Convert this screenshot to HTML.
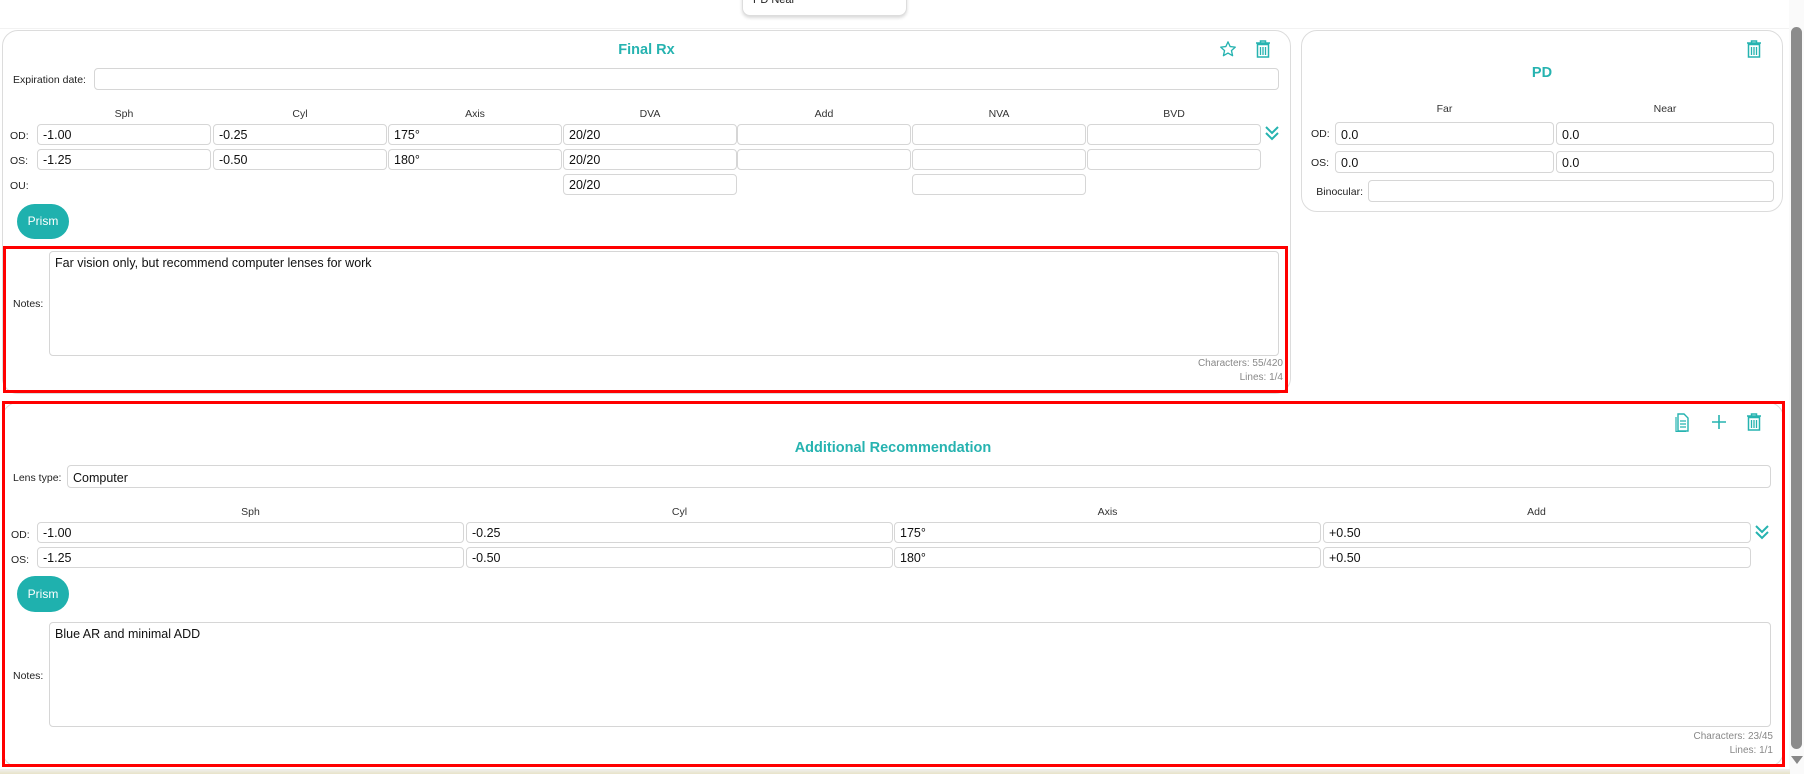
<!DOCTYPE html>
<html><head><meta charset="utf-8"><style>
*{box-sizing:border-box;margin:0;padding:0}
body{width:1804px;height:774px;overflow:hidden;background:#fff;font-family:"Liberation Sans",sans-serif;color:#222;position:relative}
.a{position:absolute}
.card{position:absolute;border:1px solid #dcdcdc;border-radius:16px;background:#fff}
.in{position:absolute;border:1px solid #d6d6d6;border-radius:4px;background:#fff;font-size:12.5px;padding-left:5px;line-height:20px;color:#111}
.lb{position:absolute;font-size:10.5px;color:#222;white-space:nowrap}
.hd{position:absolute;font-size:10.5px;color:#333;text-align:center}
.title{position:absolute;color:#26b3b0;font-weight:bold;font-size:14.5px;text-align:center}
.prism{position:absolute;background:#1fb1ae;color:#fff;border-radius:18px;font-size:12px;text-align:center}
.red{position:absolute;border:3px solid #ff0000}
.cnt{position:absolute;font-size:10px;color:#888;text-align:right}
</style></head><body>

<div class="a" style="left:742px;top:-12px;width:165px;height:28px;border:1px solid #ddd;border-radius:0 0 8px 8px;box-shadow:0 2px 3px rgba(0,0,0,.15);background:#fff;font-size:11px;padding:0 0 0 10px;line-height:22px;overflow:hidden">PD Near</div>
<div class="a" style="left:0;top:28px;width:1790px;height:1px;background:#f2f2f2"></div>

<!-- Final Rx card -->
<div class="card" style="left:2px;top:30px;width:1289px;height:364px"></div>
<div class="title" style="left:2px;top:42px;width:1289px">Final Rx</div>
<svg class="a" style="left:1219px;top:40px" width="18" height="18" viewBox="0 0 24 24"><path d="M12 2.5l2.9 6.3 6.8.7-5.1 4.6 1.5 6.8L12 17.4l-6.1 3.5 1.5-6.8L2.3 9.5l6.8-.7z" fill="none" stroke="#26b3b0" stroke-width="1.8" stroke-linejoin="round"/></svg>
<svg class="a" style="left:1255px;top:40px" width="16" height="18" viewBox="0 0 16 18"><path d="M1 3h14M5.5 3V1h5v2M2.5 4.5h11V17h-11z" fill="none" stroke="#26b3b0" stroke-width="1.5"/><path d="M5.5 7v8M8 7v8M10.5 7v8" stroke="#26b3b0" stroke-width="1.3"/></svg>

<div class="lb" style="left:13px;top:74px">Expiration date:</div>
<div class="in" style="left:94px;top:68px;width:1185px;height:22px"></div>

<div class="hd" style="left:37px;top:108px;width:174px">Sph</div>
<div class="hd" style="left:213px;top:108px;width:174px">Cyl</div>
<div class="hd" style="left:388px;top:108px;width:174px">Axis</div>
<div class="hd" style="left:563px;top:108px;width:174px">DVA</div>
<div class="hd" style="left:737px;top:108px;width:174px">Add</div>
<div class="hd" style="left:912px;top:108px;width:174px">NVA</div>
<div class="hd" style="left:1087px;top:108px;width:174px">BVD</div>

<div class="lb" style="left:10px;top:130px">OD:</div>
<div class="in" style="left:37px;top:124px;width:174px;height:21px">-1.00</div>
<div class="in" style="left:213px;top:124px;width:174px;height:21px">-0.25</div>
<div class="in" style="left:388px;top:124px;width:174px;height:21px">175°</div>
<div class="in" style="left:563px;top:124px;width:174px;height:21px">20/20</div>
<div class="in" style="left:737px;top:124px;width:174px;height:21px"></div>
<div class="in" style="left:912px;top:124px;width:174px;height:21px"></div>
<div class="in" style="left:1087px;top:124px;width:174px;height:21px"></div>
<svg class="a" style="left:1264px;top:125px" width="16" height="17" viewBox="0 0 16 17"><path d="M2 2l6 6 6-6M2 8l6 6 6-6" fill="none" stroke="#26b3b0" stroke-width="2"/></svg>

<div class="lb" style="left:10px;top:155px">OS:</div>
<div class="in" style="left:37px;top:149px;width:174px;height:21px">-1.25</div>
<div class="in" style="left:213px;top:149px;width:174px;height:21px">-0.50</div>
<div class="in" style="left:388px;top:149px;width:174px;height:21px">180°</div>
<div class="in" style="left:563px;top:149px;width:174px;height:21px">20/20</div>
<div class="in" style="left:737px;top:149px;width:174px;height:21px"></div>
<div class="in" style="left:912px;top:149px;width:174px;height:21px"></div>
<div class="in" style="left:1087px;top:149px;width:174px;height:21px"></div>

<div class="lb" style="left:10px;top:180px">OU:</div>
<div class="in" style="left:563px;top:174px;width:174px;height:21px">20/20</div>
<div class="in" style="left:912px;top:174px;width:174px;height:21px"></div>

<div class="prism" style="left:17px;top:204px;width:52px;height:35px;line-height:35px">Prism</div>

<div class="red" style="left:3px;top:246px;width:1285px;height:147px"></div>
<div class="lb" style="left:13px;top:298px">Notes:</div>
<div class="in" style="left:49px;top:251px;width:1230px;height:105px;line-height:18px;padding:2px 5px">Far vision only, but recommend computer lenses for work</div>
<div class="cnt" style="left:1080px;top:358px;width:203px">Characters: 55/420</div>
<div class="cnt" style="left:1080px;top:372px;width:203px">Lines: 1/4</div>

<!-- PD card -->
<div class="card" style="left:1301px;top:30px;width:482px;height:182px"></div>
<svg class="a" style="left:1746px;top:40px" width="16" height="18" viewBox="0 0 16 18"><path d="M1 3h14M5.5 3V1h5v2M2.5 4.5h11V17h-11z" fill="none" stroke="#26b3b0" stroke-width="1.5"/><path d="M5.5 7v8M8 7v8M10.5 7v8" stroke="#26b3b0" stroke-width="1.3"/></svg>
<div class="title" style="left:1301px;top:65px;width:482px">PD</div>
<div class="hd" style="left:1335px;top:103px;width:219px">Far</div>
<div class="hd" style="left:1556px;top:103px;width:218px">Near</div>
<div class="lb" style="left:1311px;top:128px">OD:</div>
<div class="in" style="left:1335px;top:122px;width:219px;height:23px;line-height:24px">0.0</div>
<div class="in" style="left:1556px;top:122px;width:218px;height:23px;line-height:24px">0.0</div>
<div class="lb" style="left:1311px;top:157px">OS:</div>
<div class="in" style="left:1335px;top:151px;width:219px;height:22px;line-height:23px">0.0</div>
<div class="in" style="left:1556px;top:151px;width:218px;height:22px;line-height:23px">0.0</div>
<div class="lb" style="left:1298px;top:186px;width:65px;text-align:right">Binocular:</div>
<div class="in" style="left:1368px;top:180px;width:406px;height:22px"></div>

<!-- Additional Recommendation -->
<div class="card" style="left:2px;top:402px;width:1782px;height:365px"></div>
<div class="red" style="left:2px;top:401px;width:1783px;height:366px"></div>
<svg class="a" style="left:1675px;top:413px" width="14" height="19" viewBox="0 0 14 19"><path d="M3 1h6l4 4v13H3z" fill="none" stroke="#26b3b0" stroke-width="1.4"/><path d="M1 4v14.5h10" fill="none" stroke="#26b3b0" stroke-width="1.2"/><path d="M5 8h6M5 11h6M5 14h6" stroke="#26b3b0" stroke-width="1.2"/></svg>
<svg class="a" style="left:1711px;top:414px" width="16" height="16" viewBox="0 0 16 16"><path d="M8 1v14M1 8h14" stroke="#26b3b0" stroke-width="1.6"/></svg>
<svg class="a" style="left:1746px;top:413px" width="16" height="18" viewBox="0 0 16 18"><path d="M1 3h14M5.5 3V1h5v2M2.5 4.5h11V17h-11z" fill="none" stroke="#26b3b0" stroke-width="1.5"/><path d="M5.5 7v8M8 7v8M10.5 7v8" stroke="#26b3b0" stroke-width="1.3"/></svg>
<div class="title" style="left:2px;top:440px;width:1782px">Additional Recommendation</div>
<div class="lb" style="left:13px;top:472px">Lens type:</div>
<div class="in" style="left:67px;top:465px;width:1704px;height:23px;line-height:24px">Computer</div>

<div class="hd" style="left:37px;top:506px;width:427px">Sph</div>
<div class="hd" style="left:466px;top:506px;width:427px">Cyl</div>
<div class="hd" style="left:894px;top:506px;width:427px">Axis</div>
<div class="hd" style="left:1323px;top:506px;width:427px">Add</div>

<div class="lb" style="left:11px;top:529px">OD:</div>
<div class="in" style="left:37px;top:522px;width:427px;height:21px">-1.00</div>
<div class="in" style="left:466px;top:522px;width:427px;height:21px">-0.25</div>
<div class="in" style="left:894px;top:522px;width:427px;height:21px">175°</div>
<div class="in" style="left:1323px;top:522px;width:428px;height:21px">+0.50</div>
<svg class="a" style="left:1754px;top:524px" width="16" height="17" viewBox="0 0 16 17"><path d="M2 2l6 6 6-6M2 8l6 6 6-6" fill="none" stroke="#26b3b0" stroke-width="2"/></svg>
<div class="lb" style="left:11px;top:554px">OS:</div>
<div class="in" style="left:37px;top:547px;width:427px;height:21px">-1.25</div>
<div class="in" style="left:466px;top:547px;width:427px;height:21px">-0.50</div>
<div class="in" style="left:894px;top:547px;width:427px;height:21px">180°</div>
<div class="in" style="left:1323px;top:547px;width:428px;height:21px">+0.50</div>

<div class="prism" style="left:17px;top:576px;width:52px;height:36px;line-height:36px">Prism</div>

<div class="lb" style="left:13px;top:670px">Notes:</div>
<div class="in" style="left:49px;top:622px;width:1722px;height:105px;line-height:18px;padding:2px 5px">Blue AR and minimal ADD</div>
<div class="cnt" style="left:1570px;top:731px;width:203px">Characters: 23/45</div>
<div class="cnt" style="left:1570px;top:745px;width:203px">Lines: 1/1</div>

<!-- scrollbar -->
<div class="a" style="left:1789px;top:0;width:15px;height:774px;background:#fafafa"></div>
<div class="a" style="left:1791px;top:27px;width:11px;height:722px;background:#8c8c8c;border-radius:6px"></div>
<div class="a" style="left:1791px;top:756px;width:0;height:0;border-left:6px solid transparent;border-right:6px solid transparent;border-top:8px solid #888"></div>
<div class="a" style="left:0;top:769px;width:1790px;height:5px;background:linear-gradient(#f0f0f0,#e8e3c8)"></div>
</body></html>
